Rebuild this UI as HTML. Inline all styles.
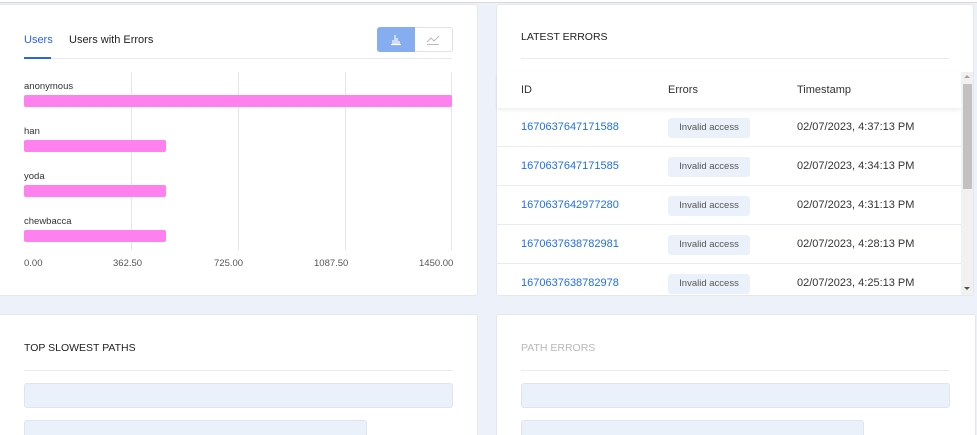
<!DOCTYPE html>
<html><head><style>
*{margin:0;padding:0;box-sizing:border-box}
html,body{width:977px;height:435px;overflow:hidden}
body{background:#edf2fa;font-family:"Liberation Sans",sans-serif;position:relative;color:#333}
.a{position:absolute}
.card{position:absolute;background:#fff;border:1px solid #e3e7ee;border-radius:3px}
.t{font-size:11px;white-space:nowrap}
.bar{position:absolute;background:#ff80ee;border-radius:2px;height:12px;left:24px}
.g{position:absolute;top:72px;height:178px;width:1px;background:#e6e6e6}
.row{position:absolute;left:497px;width:464px;height:39px;border-bottom:1px solid #e8ebf0}
.id{position:absolute;left:24px;top:13px;color:#1f6fe8;font-size:11px}
.bd{position:absolute;left:171px;top:10px;width:82px;height:20px;background:#eaf1fa;border-radius:3px;font-size:9.5px;color:#555;text-align:center;line-height:20px}
.ts{position:absolute;left:300px;top:13px;font-size:11px;color:#333}
.sk{position:absolute;background:#ebf1fa;border:1px solid #dfe5ee;border-radius:3px}
</style></head><body>
<div class="a" style="left:0;top:0;width:977px;height:3px;background:#fff;border-bottom:1px solid #d8d8d8"></div>
<div class="card" style="left:-2px;top:4px;width:480px;height:292px"></div>
<div class="card" style="left:496px;top:4px;width:478px;height:292px"></div>
<div class="card" style="left:-2px;top:314px;width:480px;height:140px"></div>
<div class="card" style="left:496px;top:314px;width:480px;height:140px"></div>

<div class="a t" style="left:24px;top:34px;font-size:11px;color:#2a62f4">Users</div>
<div class="a t" style="left:69px;top:34px;font-size:11px;color:#222">Users with Errors</div>
<div class="a" style="left:24px;top:58px;width:428px;height:1px;background:#e6e9ee"></div>
<div class="a" style="left:24px;top:57px;width:27px;height:2px;background:#2a62f4"></div>
<div class="a" style="left:377px;top:27px;width:76px;height:25px;border:1px solid #dde2ea;border-radius:3px"></div>
<div class="a" style="left:377px;top:27px;width:38px;height:25px;background:#86adf0;border-radius:3px 0 0 3px"></div>
<svg class="a" style="left:388px;top:32px" width="16" height="14"><path d="M5 12V8M7 12V3M9 12V6M11 12V9M3 12.5H13" stroke="#fff" stroke-width="1.2" fill="none"/></svg>
<svg class="a" style="left:425px;top:32px" width="16" height="14"><path d="M2 10L6 6L9 9L14 4M2 12.5H14" stroke="#bbb" stroke-width="1" fill="none"/></svg>

<div class="g" style="left:131px"></div><div class="g" style="left:238px"></div><div class="g" style="left:345px"></div><div class="g" style="left:451px"></div>
<div class="a t" style="left:24px;top:81px;font-size:9.5px">anonymous</div>
<div class="bar" style="top:95px;width:428px"></div>
<div class="a t" style="left:24px;top:126px;font-size:9.5px">han</div>
<div class="bar" style="top:140px;width:142px"></div>
<div class="a t" style="left:24px;top:171px;font-size:9.5px">yoda</div>
<div class="bar" style="top:185px;width:142px"></div>
<div class="a t" style="left:24px;top:216px;font-size:9.5px">chewbacca</div>
<div class="bar" style="top:230px;width:142px"></div>
<div class="a t" style="left:24px;top:258px;font-size:9.5px;color:#555">0.00</div>
<div class="a t" style="left:113px;top:258px;font-size:9.5px;color:#555">362.50</div>
<div class="a t" style="left:214px;top:258px;font-size:9.5px;color:#555">725.00</div>
<div class="a t" style="left:314px;top:258px;font-size:9.5px;color:#555">1087.50</div>
<div class="a t" style="left:419px;top:258px;font-size:9.5px;color:#555">1450.00</div>

<div class="a t" style="left:521px;top:31px;font-size:10.5px;color:#222">LATEST ERRORS</div>
<div class="a" style="left:521px;top:58px;width:428px;height:1px;background:#e6e9ee"></div>
<div class="a" style="left:497px;top:72px;width:464px;height:36px;background:#fff;box-shadow:0 2px 4px rgba(0,0,0,.07)"></div>
<div class="a t" style="left:521px;top:84px">ID</div>
<div class="a t" style="left:668px;top:84px">Errors</div>
<div class="a t" style="left:797px;top:84px">Timestamp</div>
<div class="row" style="top:108px"><div class="id">1670637647171588</div><div class="bd">Invalid access</div><div class="ts">02/07/2023, 4:37:13 PM</div></div>
<div class="row" style="top:147px"><div class="id">1670637647171585</div><div class="bd">Invalid access</div><div class="ts">02/07/2023, 4:34:13 PM</div></div>
<div class="row" style="top:186px"><div class="id">1670637642977280</div><div class="bd">Invalid access</div><div class="ts">02/07/2023, 4:31:13 PM</div></div>
<div class="row" style="top:225px"><div class="id">1670637638782981</div><div class="bd">Invalid access</div><div class="ts">02/07/2023, 4:28:13 PM</div></div>
<div class="row" style="top:264px;border:none;height:31px"><div class="id">1670637638782978</div><div class="bd">Invalid access</div><div class="ts">02/07/2023, 4:25:13 PM</div></div>
<div class="a" style="left:961px;top:72px;width:12px;height:223px;background:#f1f1f1"></div>
<div class="a" style="left:963px;top:84px;width:9px;height:105px;background:#c1c1c1"></div>
<div class="a" style="left:964px;top:75px;width:0;height:0;border:3px solid transparent;border-bottom-color:#a3a3a3;border-top:0"></div>
<div class="a" style="left:964px;top:287px;width:0;height:0;border:3px solid transparent;border-top-color:#505050;border-bottom:0"></div>

<div class="a t" style="left:24px;top:342px;font-size:10.5px;color:#222">TOP SLOWEST PATHS</div>
<div class="a" style="left:24px;top:370px;width:428px;height:1px;background:#e6e9ee"></div>
<div class="sk" style="left:24px;top:383px;width:429px;height:25px"></div>
<div class="sk" style="left:24px;top:420px;width:343px;height:25px"></div>
<div class="a t" style="left:521px;top:342px;font-size:10.5px;color:#b8b8b8">PATH ERRORS</div>
<div class="a" style="left:521px;top:370px;width:428px;height:1px;background:#e6e9ee"></div>
<div class="sk" style="left:521px;top:383px;width:429px;height:25px"></div>
<div class="sk" style="left:521px;top:420px;width:343px;height:25px"></div>
</body></html>
